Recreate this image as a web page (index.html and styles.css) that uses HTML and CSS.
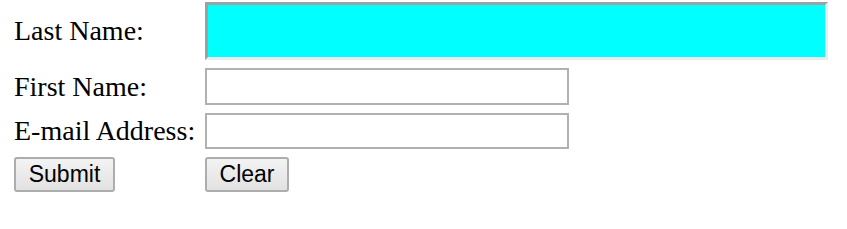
FILE: index.html
```html
<!DOCTYPE html>
<html lang="en">
<head>
  <meta charset="UTF-8" />
  <title>Contact Form</title>
  <link rel="stylesheet" href="styles.css">
</head>
<body>
  <form class="form">
    <label class="label" for="lastName">Last Name:</label>
    <input class="field field--big" type="text" id="lastName" />

    <label class="label" for="firstName">First Name:</label>
    <input class="field" type="text" id="firstName" />

    <label class="label" for="email">E-mail Address:</label>
    <input class="field" type="text" id="email" />

    <div><button type="button" class="btn btn--submit">Submit</button></div>
    <div><button type="reset" class="btn btn--clear">Clear</button></div>
  </form>
</body>
</html>
```

FILE: styles.css
```css
* {
  box-sizing: border-box;
}

body {
  margin: 2px 0 0 14px;
  background: #fff;
  font-family: 'Liberation Serif', 'Times New Roman', serif;
  font-size: 28px;
  color: #000;
}

.form {
  display: grid;
  grid-template-columns: 191px auto;
  grid-template-rows: 58px 37px 36px 35px;
  row-gap: 8px;
  align-items: center;
  justify-items: start;
}

.label {
  line-height: 1;
}

.field {
  width: 364px;
  height: 100%;
  margin: 0;
  padding: 0 4px;
  border: 2px solid #b1b1b1;
  background: #fff;
  outline: none;
}

.field--big {
  width: 623px;
  border: 3px solid;
  border-color: #a0a0a0 #ebebeb #ebebeb #a0a0a0;
  background: #00ffff;
}

.btn {
  display: block;
  height: 35px;
  margin: 0;
  padding: 0;
  border: 2px solid #adadad;
  border-radius: 3px;
  background: linear-gradient(#f3f3f3, #e2e2e2);
  font-family: 'Liberation Sans', Arial, sans-serif;
  font-size: 23px;
  color: #000;
}

.btn--submit {
  width: 101px;
}

.btn--clear {
  width: 84px;
}
```
